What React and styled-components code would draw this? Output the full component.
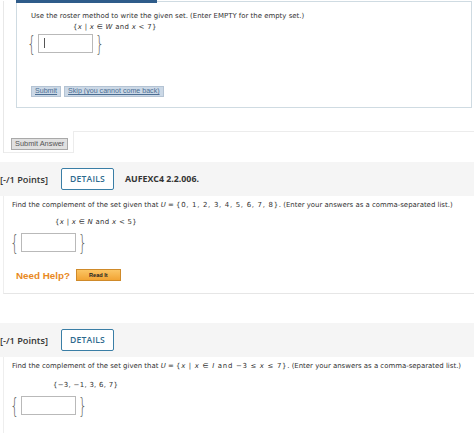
import React from "react"
import styled, { createGlobalStyle } from "styled-components"

const GlobalStyle = createGlobalStyle`
  html, body {
    margin: 0;
    padding: 0;
    background: #fff;
  }
  body {
    width: 474px;
    overflow: hidden;
    font-family: "DejaVu Sans", Verdana, sans-serif;
    color: #333;
  }
`

const Page = styled.div`
  width: 474px;
  padding-top: 1px;
`

const Outer = styled.div`
  margin-left: 3px;
  margin-top: -1px;
  border-left: 1px solid #e8e8e8;
`

const Panel = styled.div`
  margin-left: 12px;
  margin-top: 1px;
  width: 454px;
  height: 105px;
  border: 1px solid #cfdbe2;
`

const AccentBar = styled.div`
  width: 141px;
  height: 3px;
  margin-top: -2px;
  margin-left: -1px;
  background: #2f5c8a;
`

const PanelBody = styled.div`
  padding: 8px 14px 0;
`

const Prompt = styled.div`
  font-size: 6.95px;
  line-height: 11px;
  color: #333;
  white-space: nowrap;
`

const Math = styled.span`
  letter-spacing: ${p => p.$ls || 0.35}px;
`

const SetLine = styled.div`
  font-size: 6.95px;
  line-height: 11px;
  color: #333;
  white-space: nowrap;
  letter-spacing: 0.3px;
  padding-left: ${p => p.$indent || 0}px;
  padding-top: ${p => p.$top || 0}px;
`

const AnswerRow = styled.div`
  display: flex;
  align-items: center;
  gap: 4px;
  height: 20px;
  margin-top: ${p => p.$top || 0}px;
  margin-left: ${p => p.$left || 0}px;
`

const Brace = styled.span`
  display: flex;
  justify-content: center;
  width: 5px;
  font-family: "DejaVu Sans", sans-serif;
  font-weight: 200;
  font-size: 19px;
  line-height: 19px;
  color: #666;
  transform: scale(0.72, 1.12);
`

const InputBox = styled.div`
  width: 55px;
  height: 19px;
  border: 1px solid #b9b9b9;
  background: #fff;
  display: flex;
  align-items: center;
  padding-left: 5px;
  box-sizing: border-box;
  span {
    width: 1px;
    height: 10px;
    background: #555;
  }
`

const ButtonRow = styled.div`
  display: flex;
  gap: 3px;
  margin-top: 33px;
`

const LinkButton = styled.button`
  font-family: "Liberation Sans", Arial, sans-serif;
  font-size: 7.1px;
  color: #4a6d92;
  text-decoration: underline;
  background: #cbd8e6;
  border: 1px solid #b4c3d3;
  padding: 0 3px;
  height: 11px;
  line-height: 9px;
  cursor: pointer;
`

const SubmitStrip = styled.div`
  display: flex;
  height: 22px;
  margin-top: 23px;
`

const SubmitCell = styled.div`
  width: 69px;
  border-bottom: 1px solid #ececec;
  display: flex;
  align-items: center;
  padding: 4px 0 0 7px;
  box-sizing: border-box;
`

const StripRest = styled.div`
  flex: 1;
  border-top: 1px solid #ececec;
  border-left: 1px solid #ececec;
`

const GrayButton = styled.button`
  font-family: "Liberation Sans", Arial, sans-serif;
  font-size: 7.4px;
  color: #555;
  background: #e0e0e0;
  border: 1px solid #a9a9a9;
  height: 12px;
  padding: 0 3px;
  line-height: 10px;
`

const Section = styled.div`
  margin-top: ${p => p.$top || 0}px;
`

const HeaderBand = styled.div`
  background: #f5f5f5;
  height: 34px;
  display: flex;
  align-items: center;
  font-family: "Open Sans", sans-serif;
  font-weight: 600;
  font-size: 9.2px;
  color: #333;
`

const Points = styled.span`
  width: 61px;
  white-space: nowrap;
`

const DetailsButton = styled.button`
  font-family: "Open Sans", sans-serif;
  font-weight: 600;
  font-size: 8.6px;
  color: #2d6a8e;
  background: #fff;
  border: 1px solid #3a7ea6;
  border-radius: 2px;
  width: 53px;
  height: 22px;
  padding: 0;
  letter-spacing: 0.2px;
`

const Code = styled.span`
  margin-left: 11px;
  font-weight: 700;
  font-size: 8.8px;
`

const Content = styled.div`
  margin-left: 3px;
  border-left: 1px solid #eeeeee;
  border-bottom: ${p => (p.$closed ? "1px solid #e6e6e6" : "none")};
  padding: 4px 0 0 8px;
  height: ${p => p.$h}px;
  box-sizing: border-box;
`

const HelpRow = styled.div`
  display: flex;
  align-items: center;
  gap: 6px;
  margin-top: 17px;
  margin-left: 4px;
`

const NeedHelp = styled.span`
  font-family: "Liberation Sans", Arial, sans-serif;
  font-weight: 700;
  font-size: 9.8px;
  color: #e8891e;
`

const ReadIt = styled.button`
  font-family: "Liberation Sans", Arial, sans-serif;
  font-weight: 700;
  font-size: 5.6px;
  color: #222;
  background: linear-gradient(#fbc564, #f2a434);
  border: 1px solid #cf8a2a;
  width: 45px;
  height: 12px;
  padding: 0;
`

const Cursor = () => <span />

const Answer = ({ top, left, cursor }) => (
  <AnswerRow $top={top} $left={left}>
    <Brace>{"{"}</Brace>
    <InputBox>{cursor && <Cursor />}</InputBox>
    <Brace>{"}"}</Brace>
  </AnswerRow>
)

export default function App() {
  return (
    <Page>
      <GlobalStyle />
      <Outer>
        <Panel>
          <AccentBar />
          <PanelBody>
            <Prompt>
              Use the roster method to write the given set. (Enter EMPTY for the empty set.)
            </Prompt>
            <SetLine $indent={42}>
              {"{"}<i>x</i> | <i>x</i> ∈ <i>W</i> and <i>x</i> &lt; 7{"}"}
            </SetLine>
            <Answer top={0} left={-2} cursor />
            <ButtonRow>
              <LinkButton>Submit</LinkButton>
              <LinkButton>Skip (you cannot come back)</LinkButton>
            </ButtonRow>
          </PanelBody>
        </Panel>
        <SubmitStrip>
          <SubmitCell>
            <GrayButton>Submit Answer</GrayButton>
          </SubmitCell>
          <StripRest />
        </SubmitStrip>
      </Outer>

      <Section $top={9}>
        <HeaderBand>
          <Points>[-/1 Points]</Points>
          <DetailsButton>DETAILS</DetailsButton>
          <Code>AUFEXC4 2.2.006.</Code>
        </HeaderBand>
        <Content $closed $h={98}>
          <Prompt>
            Find the complement of the set given that <i>U</i> ={" "}
            <Math $ls={0.7}>{"{"}0, 1, 2, 3, 4, 5, 6, 7, 8{"}"}</Math>. (Enter your answers as a comma-separated list.)
          </Prompt>
          <SetLine $indent={43} $top={6}>
            {"{"}<i>x</i> | <i>x</i> ∈ <i>N</i> and <i>x</i> &lt; 5{"}"}
          </SetLine>
          <Answer top={4} left={0} />
          <HelpRow>
            <NeedHelp>Need Help?</NeedHelp>
            <ReadIt>Read It</ReadIt>
          </HelpRow>
        </Content>
      </Section>

      <Section $top={29}>
        <HeaderBand>
          <Points>[-/1 Points]</Points>
          <DetailsButton>DETAILS</DetailsButton>
        </HeaderBand>
        <Content $h={80}>
          <Prompt>
            Find the complement of the set given that <i>U</i> ={" "}
            <Math $ls={0.7}>{"{"}<i>x</i> | <i>x</i> ∈ <i>I</i> and −3 ≤ <i>x</i> ≤ 7{"}"}</Math>. (Enter your answers as a comma-separated list.)
          </Prompt>
          <SetLine $indent={41} $top={8}>
            {"{"}−3, −1, 3, 6, 7{"}"}
          </SetLine>
          <Answer top={4} left={0} />
        </Content>
      </Section>
    </Page>
  )
}
